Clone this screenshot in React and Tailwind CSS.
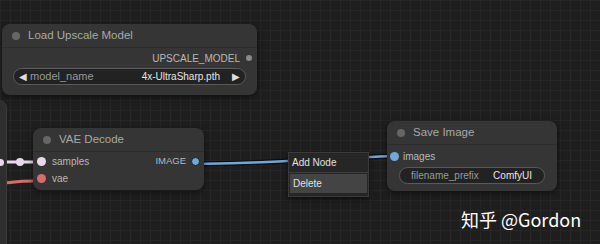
import React from 'react';

function Dot({ color }) {
  return (
    <span
      className="inline-block w-[9px] h-[9px] rounded-full"
      style={{ backgroundColor: color }}
    />
  );
}

function NodeTitle({ title }) {
  return (
    <div className="flex items-center h-[24px] px-[10px] gap-[8px] border-b border-[#2c2c2c]">
      <span className="w-[8px] h-[8px] rounded-full bg-[#666]" />
      <span className="text-[11.5px] text-[#a8a8a8]">{title}</span>
    </div>
  );
}

export default function App() {
  return (
    <div
      className="relative w-[600px] h-[244px] overflow-hidden bg-[#1e1e1e] bg-[linear-gradient(#262626_1px,transparent_1px),linear-gradient(90deg,#262626_1px,transparent_1px)] bg-[size:10px_10px]"
      style={{ fontFamily: '"Liberation Sans", Arial, sans-serif' }}
    >
      {/* links */}
      <svg className="absolute inset-0" width="600" height="244">
        <path d="M0 162 L33 162" stroke="#e7d9ea" strokeWidth="3" fill="none" />
        <circle cx="20" cy="162" r="4" fill="#e7d9ea" />
        <path d="M5 183 C15 182, 22 181, 33 181" stroke="#d86b6b" strokeWidth="3" fill="none" />
        <path d="M196 164 C260 164, 330 158, 394 156" stroke="#000" strokeWidth="5" fill="none" opacity="0.6" />
        <path d="M196 164 C260 164, 330 158, 394 156" stroke="#6ea8dc" strokeWidth="2.5" fill="none" />
      </svg>

      {/* partial node at left */}
      <div className="absolute left-[-60px] top-[100px] w-[67px] h-[160px] rounded-lg bg-[#2e2e2e] border border-[#3a3a3a]">
        <span className="absolute right-[2px] top-[58px] w-[7px] h-[7px] rounded-full bg-[#e7d9ea]" />
      </div>

      {/* Load Upscale Model */}
      <div className="absolute left-[2px] top-[24px] w-[255px] h-[71px] rounded-lg bg-[#353535] shadow-[0_2px_6px_rgba(0,0,0,0.5)]">
        <NodeTitle title="Load Upscale Model" />
        <div className="flex items-center justify-end gap-[6px] pr-[5px] h-[20px] text-[10px] text-[#b8b8b8]">
          <span>UPSCALE_MODEL</span>
          <span className="w-[6px] h-[6px] rounded-full bg-[#8a8a8a]" />
        </div>
        <div className="px-[11px]">
          <div className="flex items-center h-[17px] rounded-full bg-[#222] border border-[#5a5a5a] px-[5px]">
            <span className="text-[#ddd] text-[10px] mr-[3px]">◀</span>
            <span className="text-[#999] text-[11px] flex-1">model_name</span>
            <span className="text-[#e6e6e6] text-[10px] pr-[8px]">4x-UltraSharp.pth</span>
            <span className="text-[#ddd] text-[10px] ml-[4px]">▶</span>
          </div>
        </div>
      </div>

      {/* VAE Decode */}
      <div className="absolute left-[33px] top-[128px] w-[171px] h-[62px] rounded-lg bg-[#353535] shadow-[0_2px_6px_rgba(0,0,0,0.5)]">
        <NodeTitle title="VAE Decode" />
        <div className="flex items-center h-[18px] text-[10px] text-[#b8b8b8] pl-[4px] pr-[4px]">
          <Dot color="#e7d9ea" />
          <span className="ml-[6px] flex-1">samples</span>
          <span className="mr-[5px] text-[9.5px]">IMAGE</span>
          <span className="w-[9px] h-[9px] rounded-full bg-[#6ea8dc] border border-[#1c1c1c]" />
        </div>
        <div className="flex items-center h-[16px] text-[10px] text-[#b8b8b8] pl-[4px]">
          <Dot color="#d86b6b" />
          <span className="ml-[6px]">vae</span>
        </div>
      </div>

      {/* Save Image */}
      <div className="absolute left-[387px] top-[121px] w-[170px] h-[70px] rounded-lg bg-[#353535] shadow-[0_2px_6px_rgba(0,0,0,0.5)]">
        <NodeTitle title="Save Image" />
        <div className="flex items-center h-[20px] text-[10px] text-[#b8b8b8] pl-[3px] pt-[3px]">
          <Dot color="#6ea8dc" />
          <span className="ml-[4px]">images</span>
        </div>
        <div className="px-[12px] pt-[2px]">
          <div className="flex items-center justify-between h-[17px] rounded-full bg-[#222] border border-[#5a5a5a] text-[10px] pl-[11px] pr-[12px]">
            <span className="text-[#999]">filename_prefix</span>
            <span className="text-[#e6e6e6]">ComfyUI</span>
          </div>
        </div>
      </div>

      {/* context menu */}
      <div className="absolute left-[288px] top-[152px] w-[81px] bg-[#262626] border border-[#3a3a3a] shadow-[0_2px_6px_rgba(0,0,0,0.6)] text-[10px] text-[#e0e0e0]">
        <div className="h-[20px] flex items-center px-[3px] border-b border-[#3d3d3d]">Add Node</div>
        <div className="h-[19px] flex items-center px-[3px] mx-[1px] my-[1px] bg-[#444]">Delete</div>
        <div className="h-[2px]" />
      </div>

      {/* watermark */}
      <div
        className="absolute left-[461px] top-[206px] text-[18px] text-white"
        style={{ fontFamily: '"Noto Sans CJK SC", "Liberation Sans", sans-serif' }}
      >
        知乎 @Gordon
      </div>
    </div>
  );
}
